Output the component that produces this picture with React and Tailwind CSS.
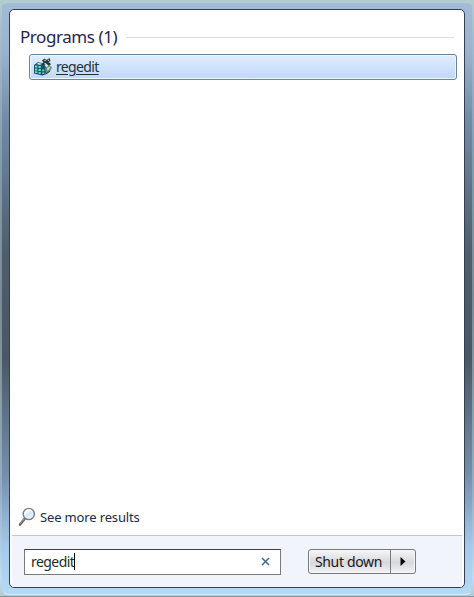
import React from 'react';

const RegeditIcon = () => (
    <svg width="20" height="20" viewBox="0 0 20 20" className="shrink-0">
        <path d="M1 8L5 5L10 6.5L13 10V16L9 18.5L1 16.5Z" fill="#175660" />
        <path d="M2 8.5h2.3v2H2zM2 11.5h2.3v2H2zM2 14.3h2.3v1.6H2zM5.5 9h2.3v2H5.5zM5.5 12h2.3v2H5.5zM5.5 15h2.3v1.8H5.5zM9.3 12.5h2v1.8h-2zM9.3 15.4h2V17h-2z" fill="#6edbd6" />
        <path d="M3.5 7l2-1.2L9 6.8L7 8z" fill="#b9ebe4" />
        <path d="M9 3.5l2.5-2l2 1.5l3-2l1 3l-2 1l2.5 2l-2 2l-3-2.5l-2 2.5l-2.5-2l2-1.5z" fill="#26383a" />
        <path d="M11 3.2l1.2-.8l1 1l-1.2.8zM14.5 3.2l1.4-1l.4 1.3l-1 .6zM11 6.8l1.3-1l1 .8l-1.2 1.2z" fill="#a8d0c8" />
        <path d="M12 11l4-2.5l3 1.5l-2 4.5l-4 3z" fill="#618f88" />
        <path d="M14 11l3-1.5l-.5 2.5l-2 1.8z" fill="#d5dfac" />
        <path d="M9 18l4-1.2l4-2.6" stroke="#253f3e" fill="none" />
    </svg>
);

const SearchIcon = () => (
    <svg width="18" height="20" viewBox="0 0 18 20" className="shrink-0">
        <path d="M6.5 12L2 17.5" stroke="#66615f" strokeWidth="2.6" strokeLinecap="round" />
        <path d="M6.2 11.8L2.2 16.8" stroke="#aaa39d" strokeWidth="0.9" />
        <circle cx="10.8" cy="7" r="5.6" fill="#e4f1fa" stroke="#777f88" strokeWidth="1.4" />
        <path d="M7 7.5a3.8 3.8 0 0 1 6-3.5" stroke="#ffffff" strokeWidth="1.5" fill="none" />
        <path d="M8 9.5l5.5-4" stroke="#c8e2f2" strokeWidth="1.5" />
    </svg>
);

const ShutDownButton = () => (
    <div className="ml-[27px] flex h-[25px] w-[108px] rounded-[3px] border border-[#77797e] bg-linear-to-b from-[#f6f6f8] via-[#d7d8dc] via-55% to-[#f3f3f6] shadow-[inset_0_0_0_1px_#f7f7f9]">
        <button className="flex w-[82px] items-center justify-center whitespace-nowrap border-r border-[#77797e] pr-[2px] text-[14px] tracking-[-0.33px] text-[#17171c]">
            Shut down
        </button>
        <button className="flex flex-1 items-center justify-center">
            <svg width="6" height="9" viewBox="0 0 6 9">
                <path d="M0.5 0L5.5 4.5L0.5 9Z" fill="#08080a" />
            </svg>
        </button>
    </div>
);

const App = () => {
    return (
        <div className="h-[597px] w-[474px] overflow-hidden border-b border-[#8495a0] bg-[linear-gradient(to_bottom,#b4cdcc_0%,#a3bdcb_6%,#839dad_25%,#7a8b95_50%,#84969c_62%,#94aec6_82%,#bfdcf0_97%,#b4cbd0_100%)] pt-[2px] font-['Noto_Sans','Open_Sans',sans-serif]">
            {/* Glass frame */}
            <div className="mx-[2px] h-[593px] rounded-[6px] border border-transparent border-t-[#b3cbe2] border-b-[#d5ebf8] bg-[linear-gradient(to_bottom,#a3bbd7_0%,#9ab3cf_8%,#718ba6_20%,#4e5e6d_42%,#495866_60%,#7590ab_80%,#a5c9ec_92%,#b4daf5_100%)] px-[6px] pt-[6px]">
                <div className="flex h-[579px] w-[456px] flex-col overflow-hidden rounded-[5px] border border-[#34404f] bg-white">
                    {/* Results */}
                    <div className="flex-1">
                        <div className="mt-[15px] flex h-[24px] items-center px-[10px]">
                            <span className="w-[98px] whitespace-nowrap text-[17px] tracking-[-0.43px] text-[#25264f]">Programs (1)</span>
                            <span className="ml-[8px] h-px flex-1 bg-[#dddce3]" />
                        </div>
                        <div className="ml-[19px] mr-[7px] mt-[5px] flex h-[26px] items-center rounded-[3px] border border-[#68849f] bg-linear-to-b from-[#e1edfd] to-[#bfd8fc] pl-[3px] shadow-[inset_0_0_0_1px_#edf5fe]">
                            <RegeditIcon />
                            <span className="ml-[3px] text-[14px] leading-[20px] tracking-[-0.65px] text-[#1d303c] underline underline-offset-2">regedit</span>
                        </div>
                    </div>
                    <div className="flex h-[36px] items-center pl-[8px] text-[#182b48]">
                        <SearchIcon />
                        <span className="ml-[4px] pt-px text-[13px] tracking-[-0.15px]">See more results</span>
                    </div>
                    {/* Search bar */}
                    <div className="mx-[2px] flex h-[52px] items-center border-t border-[#b7cadd] bg-[#f1f4fb] pl-[12px]">
                        <div className="flex h-[26px] w-[257px] items-center border border-[#777b80] border-t-[#3d4045] bg-white pl-[6px] pr-[10px]">
                            <span className="text-[14px] tracking-[-0.55px] text-[#17301c]">regedit</span>
                            <span className="h-[17px] w-px bg-black" />
                            <svg width="9" height="9" viewBox="0 0 9 9" className="ml-auto">
                                <path d="M1 1L8 8M8 1L1 8" stroke="#416b8d" strokeWidth="1.5" />
                            </svg>
                        </div>
                        <ShutDownButton />
                    </div>
                </div>
            </div>
        </div>
    );
};

export default App;
